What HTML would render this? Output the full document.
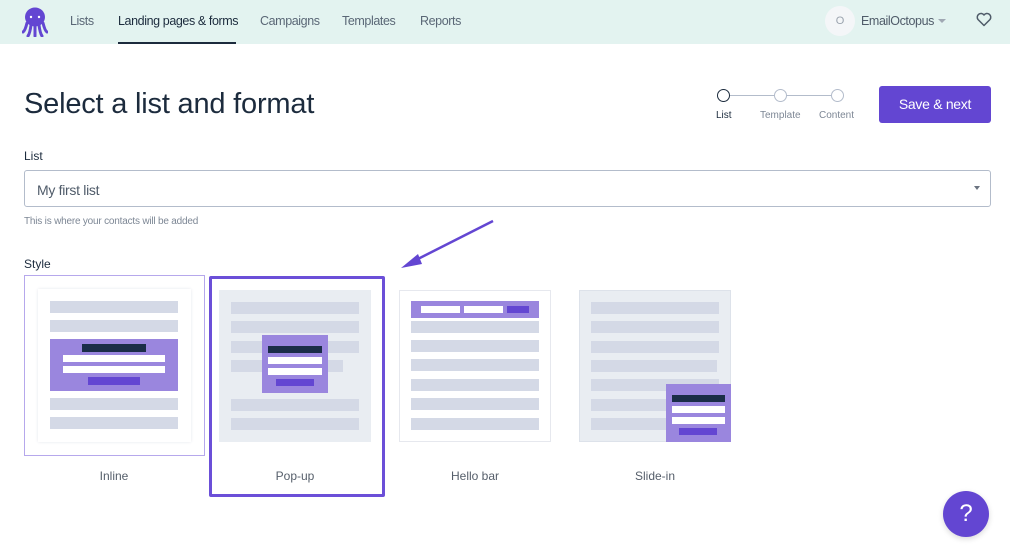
<!DOCTYPE html>
<html><head><meta charset="utf-8"><style>
*{box-sizing:border-box;margin:0;padding:0}
body{width:1010px;height:560px;background:#fff;font-family:"Liberation Sans",sans-serif;position:relative;overflow:hidden;color:#1c2b3d}
.a{position:absolute}
.nav{left:0;top:0;width:1010px;height:44px;background:#e3f3f0}
.nl{font-size:12.5px;color:#5a6776;top:14px;letter-spacing:-0.4px;white-space:nowrap}
.bar{position:absolute;background:#d4d9e6;height:12px}
.w{position:absolute;background:#fff}
.pu{position:absolute;background:#9a86de}
.dk{position:absolute;background:#1b2d48}
.bt{position:absolute;background:#6346d2}
.lbl{font-size:12px;color:#555e6a;top:469px;width:150px;text-align:center}
</style></head><body>
<div class="a nav"></div>
<svg class="a" style="left:22px;top:7px" width="26" height="30" viewBox="0 0 26 30"><ellipse cx="13" cy="10" rx="10" ry="9.5" fill="#6346d2"/><path d="M5 16 Q3 24 1 25 M9 18 Q8 26 6 29 M13 18 V29 M17 18 Q18 26 20 29 M21 16 Q23 24 25 25" stroke="#6346d2" stroke-width="3" fill="none" stroke-linecap="round"/><circle cx="9" cy="10" r="1.2" fill="#fff"/><circle cx="17" cy="10" r="1.2" fill="#fff"/></svg>
<div class="a nl" style="left:70px">Lists</div>
<div class="a nl" style="left:118px;color:#1c2b3d">Landing pages &amp; forms</div>
<div class="a" style="left:118px;top:42px;width:118px;height:2px;background:#1c2b3d"></div>
<div class="a nl" style="left:260px">Campaigns</div>
<div class="a nl" style="left:342px">Templates</div>
<div class="a nl" style="left:420px">Reports</div>
<div class="a" style="left:825px;top:6px;width:30px;height:30px;border-radius:50%;background:#f4f6f8;color:#9aa3ae;font-size:11px;text-align:center;line-height:30px">O</div>
<div class="a nl" style="left:861px;color:#4f5b69">EmailOctopus</div>
<div class="a" style="left:938px;top:19px;border:4px solid transparent;border-top-color:#a0a8b3;border-bottom:0"></div>
<svg class="a" style="left:976px;top:12px" width="16" height="15" viewBox="0 0 16 15"><path d="M8 13.5 L2 7.5 A3.3 3.3 0 0 1 8 3 A3.3 3.3 0 0 1 14 7.5 Z" fill="none" stroke="#4f5b69" stroke-width="1.5" stroke-linejoin="round"/></svg>

<div class="a" style="left:24px;top:88px;font-size:29px;color:#1c2b3d;letter-spacing:-0.2px">Select a list and format</div>
<div class="a" style="left:730px;top:95px;width:44px;height:1px;background:#b3bccb"></div>
<div class="a" style="left:786px;top:95px;width:45px;height:1px;background:#b3bccb"></div>
<div class="a" style="left:717px;top:89px;width:13px;height:13px;border-radius:50%;border:1.5px solid #1c2b3d"></div>
<div class="a" style="left:774px;top:89px;width:13px;height:13px;border-radius:50%;border:1px solid #b3bccb"></div>
<div class="a" style="left:831px;top:89px;width:13px;height:13px;border-radius:50%;border:1px solid #b3bccb"></div>
<div class="a" style="left:716px;top:110px;font-size:10px;color:#1c2b3d">List</div>
<div class="a" style="left:760px;top:110px;font-size:10px;color:#7d8795">Template</div>
<div class="a" style="left:819px;top:110px;font-size:10px;color:#7d8795">Content</div>
<div class="a" style="left:879px;top:86px;width:112px;height:37px;background:#6346d2;border-radius:3px;color:#fff;font-size:14px;text-align:center;line-height:37px;letter-spacing:-0.3px">Save &amp; next</div>

<div class="a" style="left:24px;top:149px;font-size:12px">List</div>
<div class="a" style="left:24px;top:170px;width:967px;height:37px;border:1px solid #b3bccb;border-radius:3px;font-size:14px;color:#4f5b69;padding:11px 0 0 12px;letter-spacing:-0.3px">My first list</div>
<div class="a" style="left:974px;top:186px;border:3px solid transparent;border-top:4px solid #6b7380;border-bottom:0"></div>
<div class="a" style="left:24px;top:216px;font-size:10px;color:#7d8795;letter-spacing:-0.2px">This is where your contacts will be added</div>
<div class="a" style="left:24px;top:257px;font-size:12px">Style</div>
<svg class="a" style="left:398px;top:218px" width="100" height="54"><path d="M95 3 L10 46" stroke="#6346d2" stroke-width="2.5"/><path d="M3 50 L20 36 L24 46 Z" fill="#6346d2"/></svg>

<!-- Inline -->
<div class="a" style="left:24px;top:275px;width:181px;height:181px;border:1px solid #b6a8ec"></div>
<div class="a" style="left:38px;top:289px;width:153px;height:153px;background:#fff;box-shadow:0 0 3px #e4e6ec"></div>
<div class="bar" style="left:50px;top:301px;width:128px"></div>
<div class="bar" style="left:50px;top:320px;width:128px"></div>
<div class="pu" style="left:50px;top:339px;width:128px;height:52px"></div>
<div class="dk" style="left:82px;top:344px;width:64px;height:8px"></div>
<div class="w" style="left:63px;top:355px;width:102px;height:7px"></div>
<div class="w" style="left:63px;top:366px;width:102px;height:7px"></div>
<div class="bt" style="left:88px;top:377px;width:52px;height:8px"></div>
<div class="bar" style="left:50px;top:398px;width:128px"></div>
<div class="bar" style="left:50px;top:417px;width:128px"></div>
<div class="a lbl" style="left:39px">Inline</div>

<!-- Pop-up -->
<div class="a" style="left:209px;top:276px;width:176px;height:221px;border:3px solid #6b4fd8;border-radius:2px"></div>
<div class="a" style="left:219px;top:290px;width:152px;height:152px;background:#e9edf2"></div>
<div class="bar" style="left:231px;top:302px;width:128px"></div>
<div class="bar" style="left:231px;top:321px;width:128px"></div>
<div class="bar" style="left:231px;top:341px;width:128px"></div>
<div class="bar" style="left:231px;top:360px;width:112px"></div>
<div class="bar" style="left:231px;top:399px;width:128px"></div>
<div class="bar" style="left:231px;top:418px;width:128px"></div>
<div class="pu" style="left:262px;top:335px;width:66px;height:58px"></div>
<div class="dk" style="left:268px;top:346px;width:54px;height:7px"></div>
<div class="w" style="left:268px;top:357px;width:54px;height:7px"></div>
<div class="w" style="left:268px;top:368px;width:54px;height:7px"></div>
<div class="bt" style="left:276px;top:379px;width:38px;height:7px"></div>
<div class="a lbl" style="left:220px">Pop-up</div>

<!-- Hello bar -->
<div class="a" style="left:399px;top:290px;width:152px;height:152px;background:#fff;border:1px solid #e6e8ee"></div>
<div class="pu" style="left:411px;top:301px;width:128px;height:17px"></div>
<div class="w" style="left:421px;top:306px;width:39px;height:7px"></div>
<div class="w" style="left:464px;top:306px;width:39px;height:7px"></div>
<div class="bt" style="left:507px;top:306px;width:22px;height:7px"></div>
<div class="bar" style="left:411px;top:321px;width:128px"></div>
<div class="bar" style="left:411px;top:340px;width:128px"></div>
<div class="bar" style="left:411px;top:359px;width:128px"></div>
<div class="bar" style="left:411px;top:379px;width:128px"></div>
<div class="bar" style="left:411px;top:398px;width:128px"></div>
<div class="bar" style="left:411px;top:418px;width:128px"></div>
<div class="a lbl" style="left:400px">Hello bar</div>

<!-- Slide-in -->
<div class="a" style="left:579px;top:290px;width:152px;height:152px;background:#e9edf2;border:1px solid #dde2ea"></div>
<div class="bar" style="left:591px;top:302px;width:128px"></div>
<div class="bar" style="left:591px;top:321px;width:128px"></div>
<div class="bar" style="left:591px;top:341px;width:128px"></div>
<div class="bar" style="left:591px;top:360px;width:126px"></div>
<div class="bar" style="left:591px;top:379px;width:128px"></div>
<div class="bar" style="left:591px;top:399px;width:128px"></div>
<div class="bar" style="left:591px;top:418px;width:128px"></div>
<div class="pu" style="left:666px;top:384px;width:65px;height:58px"></div>
<div class="dk" style="left:672px;top:395px;width:53px;height:7px"></div>
<div class="w" style="left:672px;top:406px;width:53px;height:7px"></div>
<div class="w" style="left:672px;top:417px;width:53px;height:7px"></div>
<div class="bt" style="left:679px;top:428px;width:38px;height:7px"></div>
<div class="a lbl" style="left:580px">Slide-in</div>

<div class="a" style="left:943px;top:491px;width:46px;height:46px;border-radius:50%;background:#6346d2;color:#fff;font-size:24px;text-align:center;line-height:46px;box-shadow:0 2px 6px rgba(0,0,0,.15)">?</div>
</body></html>
